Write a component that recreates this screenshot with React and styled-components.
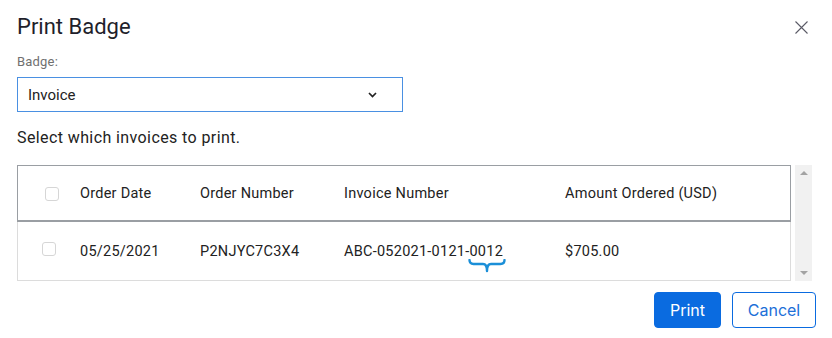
import React from "react";
import styled, { createGlobalStyle } from "styled-components";

const Global = createGlobalStyle`
  html, body { margin: 0; padding: 0; background: #fff; }
  body { font-family: Roboto, "Open Sans", Arial, sans-serif; color: #222; }
`;

const Dialog = styled.div`
  width: 832px;
  height: 338px;
  box-sizing: border-box;
  padding: 14px 16px 0 17px;
  display: flex;
  flex-direction: column;
`;

const Header = styled.div`
  display: flex;
  justify-content: space-between;
  align-items: center;
  height: 26px;
`;

const Title = styled.h1`
  margin: 0;
  font-size: 22px;
  font-weight: 400;
  line-height: 26px;
  color: #1f1f2b;
`;

const Close = styled.button`
  border: 0;
  background: none;
  padding: 0;
  margin-right: 7px;
  margin-top: 2px;
  width: 14px;
  height: 14px;
  display: flex;
  cursor: pointer;
`;

const Label = styled.label`
  margin-top: 14px;
  font-size: 13px;
  line-height: 16px;
  color: #707070;
  letter-spacing: 0.2px;
`;

const Select = styled.div`
  margin-top: 7px;
  width: 386px;
  height: 35px;
  box-sizing: border-box;
  border: 1px solid #4a90e2;
  display: flex;
  align-items: center;
  justify-content: space-between;
  padding: 0 25px 0 10px;
  font-size: 15px;
  color: #222;
`;

const Intro = styled.p`
  margin: 15px 0 0;
  font-size: 16px;
  line-height: 21px;
  letter-spacing: 0.4px;
  color: #222;
`;

const TableArea = styled.div`
  margin-top: 17px;
  display: flex;
  gap: 4px;
  padding-right: 4px;
`;

const Table = styled.div`
  flex: 1;
  display: flex;
  flex-direction: column;
`;

const Row = styled.div`
  display: grid;
  grid-template-columns: 62px 120px 144px 221px 1fr;
  align-items: center;
  font-size: 14.5px;
  letter-spacing: 0.25px;
  color: #222;
  border-style: solid;
  border-color: ${(p) => (p.$head ? "#9a9ea3" : "#dcdcdc")};
  border-width: ${(p) => (p.$head ? "1px 1px 2px 1px" : "0 1px 1px 1px")};
  height: ${(p) => (p.$head ? "54px" : "58px")};
`;

const Cell = styled.div`
  position: relative;
  white-space: nowrap;
  padding-top: ${(p) => (p.$head ? "0" : "1px")};
`;

const Check = styled.span`
  display: block;
  width: 12px;
  height: 12px;
  border: 1px solid #d6d6d6;
  border-radius: 3px;
  margin-left: ${(p) => p.$offset}px;
  margin-top: ${(p) => p.$top}px;
`;

const Brace = styled.svg`
  position: absolute;
  left: 124px;
  top: 17px;
`;

const Scroll = styled.div`
  width: 17px;
  background: #f1f1f1;
  display: flex;
  flex-direction: column;
  justify-content: space-between;
  align-items: center;
  padding: 6px 0;
  box-sizing: border-box;
`;

const Arrow = styled.span`
  width: 0;
  height: 0;
  border-left: 4px solid transparent;
  border-right: 4px solid transparent;
  ${(p) =>
    p.$up
      ? "border-bottom: 4px solid #a3a3a3;"
      : "border-top: 4px solid #a3a3a3;"}
`;

const Footer = styled.div`
  margin-top: 11px;
  display: flex;
  justify-content: flex-end;
  gap: 11px;
`;

const Button = styled.button`
  height: 36px;
  box-sizing: border-box;
  border-radius: 4px;
  font-family: Inter, "Open Sans", Arial, sans-serif;
  font-size: 16px;
  padding: 0 ${(p) => (p.$primary ? "15px" : "14px")};
  min-width: ${(p) => (p.$primary ? "67px" : "84px")};
  border: 1px solid #0a6be0;
  background: ${(p) => (p.$primary ? "#0a6be0" : "#fff")};
  color: ${(p) => (p.$primary ? "#fff" : "#1c6fd8")};
  cursor: pointer;
`;

export default function App() {
  return (
    <>
      <Global />
      <Dialog>
        <Header>
          <Title>Print Badge</Title>
          <Close aria-label="Close">
            <svg width="13" height="13" viewBox="0 0 13 13">
              <path d="M0.5 0.5 L12.5 12.5 M12.5 0.5 L0.5 12.5" stroke="#5a5a66" strokeWidth="1.1" />
            </svg>
          </Close>
        </Header>
        <Label>Badge:</Label>
        <Select>
          <span>Invoice</span>
          <svg width="9" height="6" viewBox="0 0 9 6">
            <path d="M1 1 L4.5 4.5 L8 1" fill="none" stroke="#222" strokeWidth="1.7" />
          </svg>
        </Select>
        <Intro>Select which invoices to print.</Intro>
        <TableArea>
          <Table>
            <Row $head>
              <Cell $head><Check $offset={27} $top={1} /></Cell>
              <Cell $head>Order Date</Cell>
              <Cell $head>Order Number</Cell>
              <Cell $head>Invoice Number</Cell>
              <Cell $head>Amount Ordered (USD)</Cell>
            </Row>
            <Row>
              <Cell><Check $offset={24} $top={-6} /></Cell>
              <Cell>05/25/2021</Cell>
              <Cell>P2NJYC7C3X4</Cell>
              <Cell>
                ABC-052021-0121-0012
                <Brace width="38" height="14" viewBox="0 0 38 14">
                  <path
                    d="M1.5 1 Q1.5 5 5.5 5 L15 5 Q19 5 19 12 Q19 5 23 5 L32.5 5 Q36.5 5 36.5 1"
                    fill="none"
                    stroke="#1b8fd8"
                    strokeWidth="2.4"
                    strokeLinecap="round"
                    strokeLinejoin="round"
                  />
                </Brace>
              </Cell>
              <Cell>$705.00</Cell>
            </Row>
          </Table>
          <Scroll>
            <Arrow $up />
            <Arrow />
          </Scroll>
        </TableArea>
        <Footer>
          <Button $primary>Print</Button>
          <Button>Cancel</Button>
        </Footer>
      </Dialog>
    </>
  );
}
